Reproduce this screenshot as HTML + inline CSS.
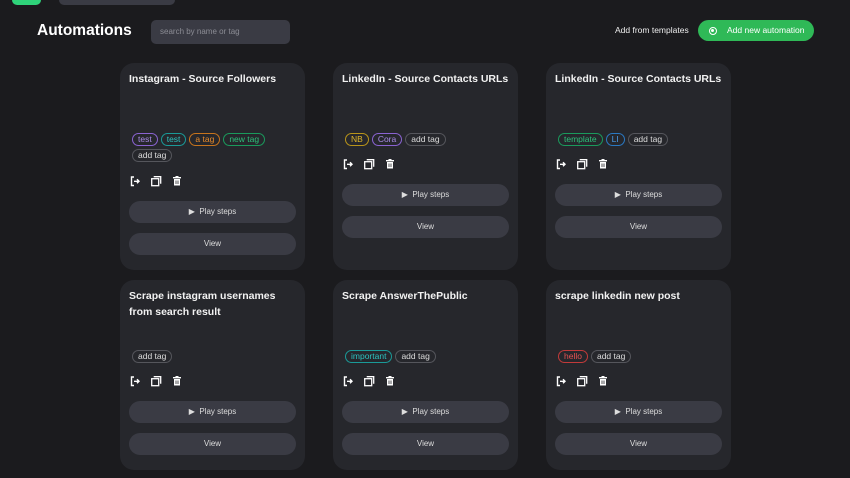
<!DOCTYPE html>
<html><head><style>
*{box-sizing:border-box;margin:0;padding:0}
body{width:850px;height:478px;background:#1b1b1e;font-family:"Liberation Sans",sans-serif;position:relative;overflow:hidden;color:#fff}
.abs{position:absolute}
.card{position:absolute;width:185px;height:207px;background:#26272c;border-radius:14px}
.title{position:absolute;left:9px;top:9px;width:170px;font-size:10.5px;font-weight:bold;line-height:15.5px;color:#f2f2f2}
.tags{position:absolute;left:12px;top:70px;width:165px;display:flex;flex-wrap:wrap;gap:3px 3px}
.tag{height:13px;border:1px solid;border-radius:7px;font-size:8.5px;line-height:11px;padding:0 5px;color:#ddd;border-color:#55565c}
.btn{position:absolute;left:9px;width:167px;height:22px;border-radius:11px;background:#3a3b44;font-size:8px;color:#ddd;text-align:center;line-height:22px}
</style></head><body>
<div class="abs" style="left:12px;top:-8px;width:29px;height:13px;border-radius:5px;background:#2fd37a"></div>
<div class="abs" style="left:59px;top:-8px;width:116px;height:13px;border-radius:5px;background:#3a3b44"></div>
<div class="abs" style="left:37px;top:21px;font-size:15.5px;font-weight:bold;line-height:20px">Automations</div>
<div class="abs" style="left:151px;top:20px;width:139px;height:24px;border-radius:5px;background:#3a3b44;font-size:8px;color:#8c8d95;line-height:24px;padding-left:9px">search by name or tag</div>
<div class="abs" style="left:615px;top:25px;font-size:8.5px;color:#eee">Add from templates</div>
<div class="abs" style="left:698px;top:20px;width:116px;height:21px;border-radius:11px;background:#2fb957;font-size:8.5px;line-height:21px;padding-left:29px">Add new automation</div>
<div class="abs" style="left:709px;top:27px;width:8px;height:8px;border-radius:50%;border:1.5px solid #fff;background:#2fb957"><div style="margin:1px;width:3px;height:3px;border-radius:50%;background:#fff"></div></div>

<svg width="0" height="0" style="position:absolute"><defs>
<g id="ic">
<path d="M4 1H1.5V9.5H4M4 5.3H9M7 3.3L9 5.3L7 7.3" stroke="#fff" stroke-width="1.4" fill="none"/>
<g transform="translate(21,0)"><rect x="0.7" y="2.7" width="7" height="7" stroke="#fff" stroke-width="1.3" fill="none"/><path d="M2.7 0.7H9.7V7.7" stroke="#fff" stroke-width="1.3" fill="none"/></g>
<g transform="translate(43,0)"><rect x="0" y="1" width="8" height="1.4" fill="#fff"/><rect x="2.5" y="0" width="3" height="1.5" fill="#fff"/><path d="M1 3H7V9.5H1Z" fill="#fff"/><path d="M3 4.5V8M5 4.5V8" stroke="#26272c" stroke-width="0.8"/></g>
</g></defs></svg>

<div class="card" style="left:120px;top:63px">
<div class="title">Instagram - Source Followers</div>
<div class="tags"><span class="tag" style="border-color:#8a63d2;color:#a98be6">test</span><span class="tag" style="border-color:#1a9a98;color:#2cc2bf">test</span><span class="tag" style="border-color:#c7741c;color:#e68a2b">a tag</span><span class="tag" style="border-color:#1a9a5c;color:#2cc27a">new tag</span><span class="tag">add tag</span></div>
<svg class="abs" style="left:10px;top:113px" width="60" height="11"><use href="#ic"/></svg>
<div class="btn" style="top:138px">▶&nbsp; Play steps</div>
<div class="btn" style="top:170px">View</div>
</div>
<div class="card" style="left:333px;top:63px">
<div class="title">LinkedIn - Source Contacts URLs</div>
<div class="tags"><span class="tag" style="border-color:#b8941a;color:#e0b628">NB</span><span class="tag" style="border-color:#8a63d2;color:#a98be6">Cora</span><span class="tag">add tag</span></div>
<svg class="abs" style="left:10px;top:96px" width="60" height="11"><use href="#ic"/></svg>
<div class="btn" style="top:121px">▶&nbsp; Play steps</div>
<div class="btn" style="top:153px">View</div>
</div>
<div class="card" style="left:546px;top:63px">
<div class="title">LinkedIn - Source Contacts URLs</div>
<div class="tags"><span class="tag" style="border-color:#1a9a5c;color:#2cc27a">template</span><span class="tag" style="border-color:#2a78c2;color:#4a9ae6">LI</span><span class="tag">add tag</span></div>
<svg class="abs" style="left:10px;top:96px" width="60" height="11"><use href="#ic"/></svg>
<div class="btn" style="top:121px">▶&nbsp; Play steps</div>
<div class="btn" style="top:153px">View</div>
</div>
<div class="card" style="left:120px;top:280px;height:190px">
<div class="title">Scrape instagram usernames from search result</div>
<div class="tags"><span class="tag">add tag</span></div>
<svg class="abs" style="left:10px;top:96px" width="60" height="11"><use href="#ic"/></svg>
<div class="btn" style="top:121px">▶&nbsp; Play steps</div>
<div class="btn" style="top:153px">View</div>
</div>
<div class="card" style="left:333px;top:280px;height:190px">
<div class="title">Scrape AnswerThePublic</div>
<div class="tags"><span class="tag" style="border-color:#1a9a98;color:#2cc2bf">important</span><span class="tag">add tag</span></div>
<svg class="abs" style="left:10px;top:96px" width="60" height="11"><use href="#ic"/></svg>
<div class="btn" style="top:121px">▶&nbsp; Play steps</div>
<div class="btn" style="top:153px">View</div>
</div>
<div class="card" style="left:546px;top:280px;height:190px">
<div class="title">scrape linkedin new post</div>
<div class="tags"><span class="tag" style="border-color:#c23a3a;color:#e65252">hello</span><span class="tag">add tag</span></div>
<svg class="abs" style="left:10px;top:96px" width="60" height="11"><use href="#ic"/></svg>
<div class="btn" style="top:121px">▶&nbsp; Play steps</div>
<div class="btn" style="top:153px">View</div>
</div>
</body></html>
